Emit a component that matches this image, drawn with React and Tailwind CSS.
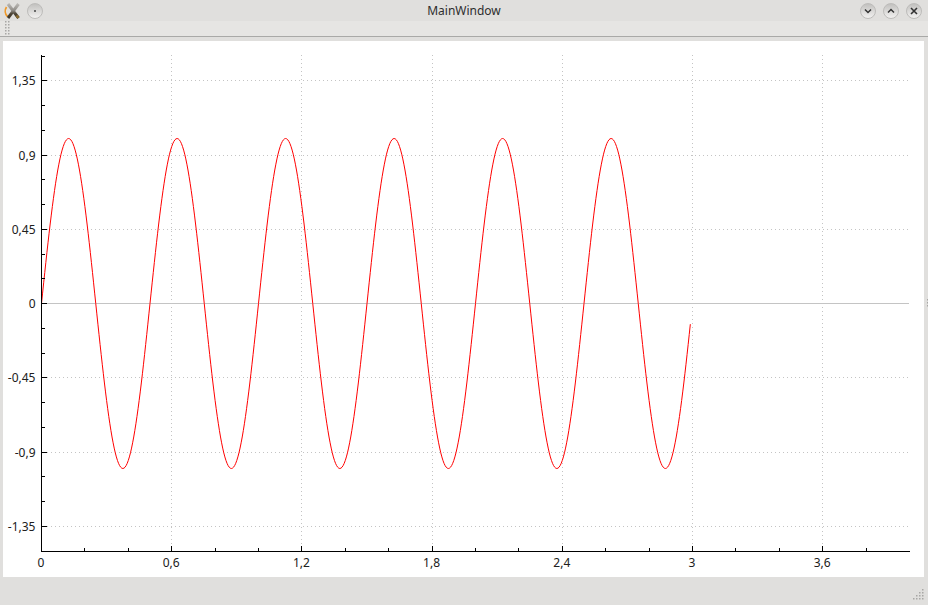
import React from 'react';

const X0 = 41.5;
const Y0 = 303.5;
const PX = 217; // px per x unit
const PY = 165; // px per y unit

const xPos = (v) => X0 + v * PX;
const yPos = (v) => Y0 - v * PY;
// snap to the middle of a pixel so ticks and grid stay crisp
const snap = (p) => Math.floor(p) + 0.5;

const yLabels = [
  [1.35, '1,35'],
  [0.9, '0,9'],
  [0.45, '0,45'],
  [0, '0'],
  [-0.45, '-0,45'],
  [-0.9, '-0,9'],
  [-1.35, '-1,35'],
];
const xLabels = [
  [0, '0'],
  [0.6, '0,6'],
  [1.2, '1,2'],
  [1.8, '1,8'],
  [2.4, '2,4'],
  [3, '3'],
  [3.6, '3,6'],
];

// sine curve, 2 Hz, sampled up to t = 2.99
const curve = [];
for (let t = 0; t <= 2.99; t += 0.005) {
  curve.push(`${xPos(t).toFixed(2)},${yPos(Math.sin(4 * Math.PI * t)).toFixed(2)}`);
}

const yMinor = [];
for (let i = -9; i <= 10; i++) yMinor.push(i * 0.15);
const xMinor = [];
for (let i = 1; i <= 19; i++) xMinor.push(i * 0.2);

const Chart = () => (
  <svg width="921" height="536" viewBox="3 41 921 536" className="block">
    {/* grid */}
    {yLabels.filter(([v]) => v !== 0).map(([v]) => (
      <line key={v} x1="47" x2="909" y1={snap(yPos(v))} y2={snap(yPos(v))} stroke="#c4c4c4" strokeDasharray="1 3" />
    ))}
    {xLabels.filter(([v]) => v !== 0).map(([v]) => (
      <line key={v} x1={snap(xPos(v))} x2={snap(xPos(v))} y1="55" y2="545" stroke="#c4c4c4" strokeDasharray="1 3" />
    ))}
    <line x1="47" x2="909" y1={snap(Y0)} y2={snap(Y0)} stroke="#c4c4c4" />

    {/* curve */}
    <polyline points={curve.join(' ')} fill="none" stroke="#ff0000" strokeWidth="1" />

    {/* axes */}
    <line x1={X0} x2={X0} y1="55" y2="552" stroke="#000" />
    <line x1={X0} x2="910" y1="551.5" y2="551.5" stroke="#000" />
    {yMinor.map((v) => (
      <line key={v} x1={X0} x2="45" y1={snap(yPos(v))} y2={snap(yPos(v))} stroke="#000" />
    ))}
    {xMinor.map((v) => (
      <line key={v} x1={snap(xPos(v))} x2={snap(xPos(v))} y1="548" y2="551" stroke="#000" />
    ))}
    {yLabels.map(([v]) => (
      <line key={v} x1={X0} x2="47" y1={snap(yPos(v))} y2={snap(yPos(v))} stroke="#000" />
    ))}
    {xLabels.filter(([v]) => v !== 0).map(([v]) => (
      <line key={v} x1={snap(xPos(v))} x2={snap(xPos(v))} y1="546" y2="551" stroke="#000" />
    ))}

    {/* labels */}
    {yLabels.map(([v, label]) => (
      <text key={v} x="35.5" y={yPos(v) + 4.5} textAnchor="end" fontSize="12" fill="#202020" fontFamily="'Noto Sans', sans-serif">
        {label}
      </text>
    ))}
    {xLabels.map(([v, label]) => (
      <text key={v} x={xPos(v) - 0.5} y="567" textAnchor="middle" fontSize="12" fill="#202020" fontFamily="'Noto Sans', sans-serif">
        {label}
      </text>
    ))}
  </svg>
);

const RoundButton = ({ children }) => (
  <div className="w-[16px] h-[16px] rounded-full bg-gradient-to-b from-[#c2c1bf] to-[#f2f1f0] border border-[#bdbcba] flex items-center justify-center">
    {children}
  </div>
);

const AppIcon = () => (
  <svg width="16" height="18" viewBox="0 0 16 18">
    <defs>
      <linearGradient id="xband" gradientUnits="userSpaceOnUse" x1="0" y1="2" x2="0" y2="16">
        <stop offset="0" stopColor="#b8b6b2" />
        <stop offset="0.45" stopColor="#908d88" />
        <stop offset="0.7" stopColor="#4c4436" />
        <stop offset="1" stopColor="#3d3526" />
      </linearGradient>
    </defs>
    <path d="M2.5 5 C0.5 8 1 12 3.5 14.5" fill="none" stroke="#ef9a2a" strokeWidth="1.8" />
    <line x1="4" y1="2" x2="14.5" y2="16" stroke="url(#xband)" strokeWidth="3" />
    <line x1="14.5" y1="2" x2="4" y2="16" stroke="url(#xband)" strokeWidth="3" />
    <line x1="12.5" y1="13.5" x2="14.5" y2="16" stroke="#8a6a2e" strokeWidth="2.5" />
  </svg>
);

// small dotted handle, cols x rows of dots on a 3px step
const Grip = ({ cols, rows, triangle }) => (
  <svg width={cols * 3} height={rows * 3} className="block">
    {Array.from({ length: rows }).flatMap((_, r) =>
      Array.from({ length: cols }).map((_, c) =>
        !triangle || c + r >= cols - 1 ? (
          <rect key={`${r}-${c}`} x={c * 3} y={r * 3} width="1.5" height="1.5" fill="#a8a7a5" />
        ) : null
      )
    )}
  </svg>
);

const App = () => {
  return (
    <div className="w-[928px] h-[605px] overflow-hidden flex flex-col bg-[#e0dfdd] font-['Noto_Sans',sans-serif]">
      {/* title bar */}
      <div className="h-[21px] shrink-0 flex items-center">
        <div className="w-[100px] flex items-center pl-[4px]">
          <AppIcon />
          <div className="ml-[7px]">
            <RoundButton>
              <div className="w-[2px] h-[2px] rounded-full bg-[#444]" />
            </RoundButton>
          </div>
        </div>
        <div className="flex-1 text-center text-xs text-[#2e2e2e] leading-none">MainWindow</div>
        <div className="w-[100px] flex justify-end gap-[7px] pr-[6px]">
          <RoundButton>
            <svg width="10" height="10" viewBox="0 0 10 10"><path d="M2 3.5 L5 6.5 L8 3.5" fill="none" stroke="#333" strokeWidth="1.5" /></svg>
          </RoundButton>
          <RoundButton>
            <svg width="10" height="10" viewBox="0 0 10 10"><path d="M2 6.5 L5 3.5 L8 6.5" fill="none" stroke="#333" strokeWidth="1.5" /></svg>
          </RoundButton>
          <RoundButton>
            <svg width="10" height="10" viewBox="0 0 10 10"><path d="M2 2 L8 8 M8 2 L2 8" fill="none" stroke="#333" strokeWidth="1.6" /></svg>
          </RoundButton>
        </div>
      </div>

      {/* toolbar */}
      <div className="h-[16px] shrink-0 bg-[#e6e5e3] border-b border-[#a9a9a7] flex items-center pl-[5px]">
        <Grip cols={2} rows={5} />
      </div>

      {/* central widget */}
      <div className="mt-[4px] pl-[3px] shrink-0 flex">
        <div className="w-[921px] h-[536px] bg-white">
          <Chart />
        </div>
        <div className="ml-[3px] mt-[258px]">
          <Grip cols={1} rows={3} />
        </div>
      </div>

      {/* status bar */}
      <div className="flex-1 flex justify-end items-end pr-[3px] pb-[4px]">
        <Grip cols={4} rows={4} triangle />
      </div>
    </div>
  );
};

export default App;
